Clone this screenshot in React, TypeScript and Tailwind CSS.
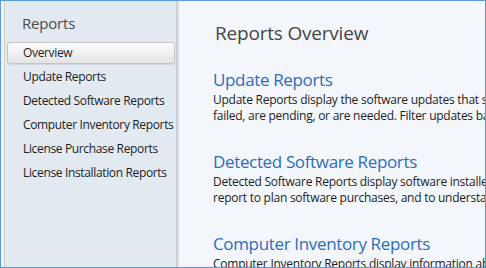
import React from "react";

const navItems = [
  "Overview",
  "Update Reports",
  "Detected Software Reports",
  "Computer Inventory Reports",
  "License Purchase Reports",
  "License Installation Reports",
];

const sections = [
  {
    title: "Update Reports",
    lines: [
      "Update Reports display the software updates that succeeded,",
      "failed, are pending, or are needed. Filter updates based on",
    ],
  },
  {
    title: "Detected Software Reports",
    lines: [
      "Detected Software Reports display software installed on computers.",
      "report to plan software purchases, and to understand usage.",
    ],
  },
  {
    title: "Computer Inventory Reports",
    lines: [
      "Computer Inventory Reports display information about computers.",
      "and more details.",
    ],
  },
];

export default function App() {
  return (
    <div
      className="w-[486px] h-[268px] border border-[#5a9ad6] flex overflow-hidden bg-[#f3f6fb]"
      style={{ fontFamily: '"Open Sans", "Noto Sans", sans-serif' }}
    >
      {/* Sidebar */}
      <div className="w-[177px] h-full flex shrink-0 border-r-2 border-[#cdd1d6] bg-[#e3e9f1]">
        <div className="w-[3px] h-full bg-[#eef2f7]" />
        <div className="w-px h-full bg-[#d3cfcb]" />
        <div className="flex-1 flex flex-col">
          <div className="pt-[12px] pl-[17px] h-[40px] text-[15px] leading-[20px] text-[#4a4a4a] tracking-[-0.2px]">
            Reports
          </div>
          <div className="flex flex-col">
            {navItems.map((item, i) => (
              <div key={item} className="h-[24px] py-px pl-[2px] pr-[1px]">
                <div
                  className={
                    i === 0
                      ? "h-[22px] rounded-[3px] border border-[#c6c6c6] bg-gradient-to-b from-[#fdfdfd] to-[#e3e3e3] shadow-[0_1px_1px_rgba(0,0,0,0.08)] pl-[15px] text-[12px] leading-[20px] text-[#1e1e1e] tracking-[-0.35px] whitespace-nowrap"
                      : "h-[22px] pl-[16px] text-[12px] leading-[22px] text-[#1e1e1e] tracking-[-0.35px] whitespace-nowrap"
                  }
                >
                  {item}
                </div>
              </div>
            ))}
          </div>
        </div>
      </div>

      {/* Content */}
      <div className="flex-1 h-full overflow-hidden bg-[#f3f6fb] border-l border-[#e4e8ee] pl-[34px]">
        <div className="pt-[20px] pl-[2px] text-[19px] leading-[24px] text-[#464646] tracking-[-0.2px] whitespace-nowrap">
          Reports Overview
        </div>
        <div className="flex flex-col gap-[28px] mt-[25px]">
          {sections.map((s) => (
            <div key={s.title} className="flex flex-col">
              <div className="text-[17px] leading-[20px] text-[#2b6dc2] tracking-[-0.35px] whitespace-nowrap">
                {s.title}
              </div>
              <div className="mt-[2px] text-[12px] leading-[16px] text-[#1e1e1e] tracking-[-0.25px] whitespace-nowrap">
                {s.lines.map((l) => (
                  <div key={l}>{l}</div>
                ))}
              </div>
            </div>
          ))}
        </div>
      </div>
    </div>
  );
}
